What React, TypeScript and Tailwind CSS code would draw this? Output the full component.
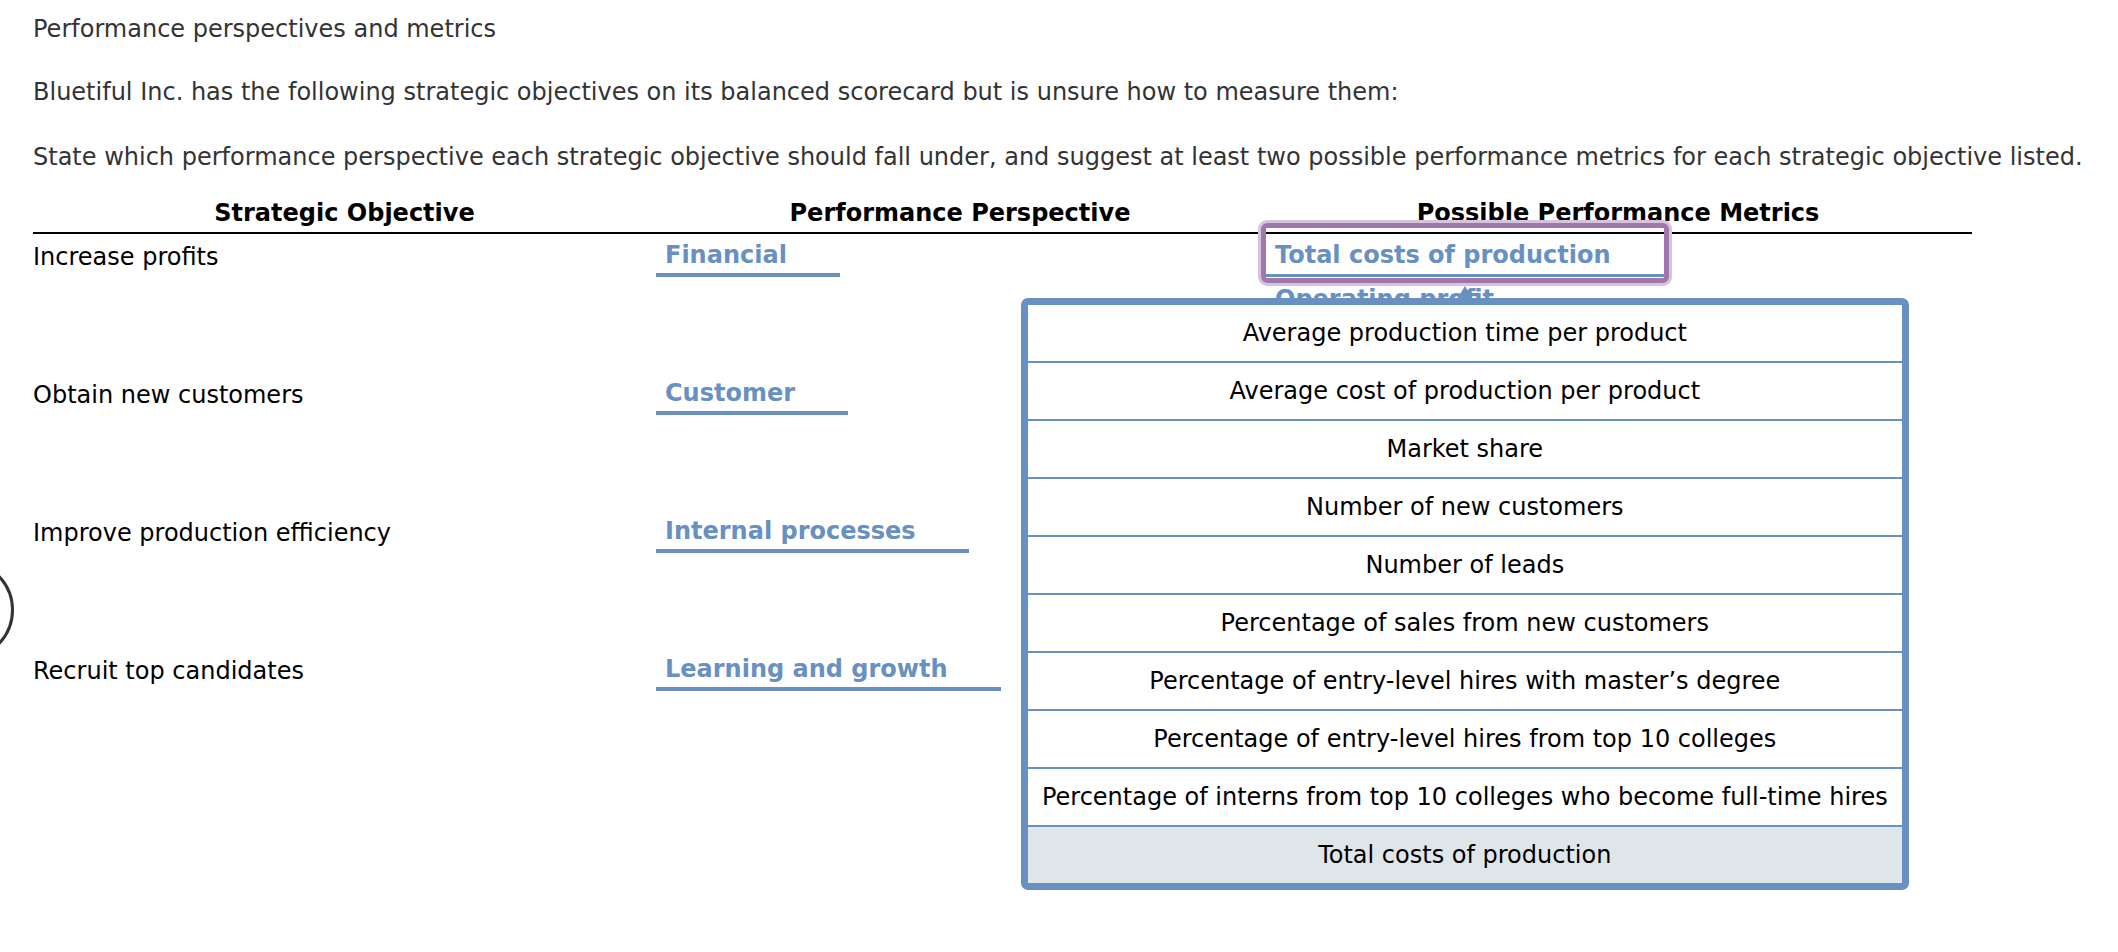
import React from "react";

const BLUE = "#6890c1";

const rows = [
  { objective: "Increase profits", perspective: "Financial" },
  { objective: "Obtain new customers", perspective: "Customer" },
  { objective: "Improve production efficiency", perspective: "Internal processes" },
  { objective: "Recruit top candidates", perspective: "Learning and growth" },
];

const options = [
  "Average production time per product",
  "Average cost of production per product",
  "Market share",
  "Number of new customers",
  "Number of leads",
  "Percentage of sales from new customers",
  "Percentage of entry-level hires with master\u2019s degree",
  "Percentage of entry-level hires from top 10 colleges",
  "Percentage of interns from top 10 colleges who become full-time hires",
  "Total costs of production",
];

function Dropdown() {
  return (
    <div className="absolute left-1/2 top-[59px] z-20 w-[888px] -translate-x-1/2">
      <svg
        className="absolute left-1/2 top-[-12px] -translate-x-1/2"
        width="16"
        height="13"
        viewBox="0 0 16 13"
      >
        <polygon points="8,0 16,13 0,13" fill={BLUE} />
      </svg>
      <div className="overflow-hidden rounded-[7px] border-[7px] border-[#6890c1] bg-white">
        {options.map((o, i) => (
          <div
            key={o}
            className={
              i === options.length - 1
                ? "h-[56px] bg-[#dfe6e9] text-center text-[24px] leading-[56px] text-black"
                : "h-[58px] border-b-2 border-[#6890c1] text-center text-[24px] leading-[56px] text-black"
            }
          >
            {o}
          </div>
        ))}
      </div>
    </div>
  );
}

export default function App() {
  return (
    <div className="relative h-[952px] w-[2118px] overflow-hidden bg-white font-['DejaVu_Sans',Verdana,sans-serif]">
      <div className="absolute left-[-86px] top-[560px] h-[100px] w-[100px] rounded-full border-[3px] border-[#333]" />
      <div className="pl-[33px] pt-[13px]">
        <p className="whitespace-nowrap text-[24px] leading-[32px] text-[#333]">
          Performance perspectives and metrics
        </p>
        <p className="mt-[31px] whitespace-nowrap text-[24px] leading-[32px] text-[#333]">
          Bluetiful Inc. has the following strategic objectives on its balanced scorecard but is unsure how to measure them:
        </p>
        <p className="mt-[33px] whitespace-nowrap text-[24px] leading-[32px] text-[#333]">
          State which performance perspective each strategic objective should fall under, and suggest at least two possible performance metrics for each strategic objective listed.
        </p>

        <div className="mt-[24px] w-[1939px]">
          <div className="grid grid-cols-[623px_608px_708px] border-b-2 border-black pb-[3px] text-center text-[24px] font-bold leading-[32px] text-black">
            <div>Strategic Objective</div>
            <div>Performance Perspective</div>
            <div>Possible Performance Metrics</div>
          </div>

          {rows.map((r, idx) => (
            <div
              key={r.objective}
              className="grid h-[138px] grid-cols-[623px_608px_708px] text-[24px] leading-[32px]"
            >
              <div className="pt-[7px] text-black">{r.objective}</div>
              <div className="pt-[5px]">
                <div
                  className="inline-block border-b-4 pb-[2px] pl-[9px] pr-[53px] font-bold text-[#6890c1]"
                  style={{ borderColor: BLUE }}
                >
                  {r.perspective}
                </div>
              </div>
              <div className="pl-[2px] pt-[5px]">
                {idx === 0 && (
                  <div className="flex flex-col items-start gap-[6px]">
                    <div className="relative inline-block">
                      <div
                        className="border-b-[3px] pb-[3px] pl-[9px] pr-[53px] font-bold text-[#6890c1]"
                        style={{ borderColor: BLUE }}
                      >
                        Total costs of production
                      </div>
                      <div className="pointer-events-none absolute -bottom-[6px] -left-[5px] -right-[5px] -top-[16px] rounded-[6px] border-[5px] border-[#a077ad] shadow-[0_0_0_3px_#d8c3de]" />
                      <Dropdown />
                    </div>
                    <div
                      className="inline-block border-b-[3px] pb-[3px] pl-[9px] pr-[53px] font-bold text-[#6890c1]"
                      style={{ borderColor: BLUE }}
                    >
                      Operating profit
                    </div>
                  </div>
                )}
              </div>
            </div>
          ))}
        </div>
      </div>
    </div>
  );
}
